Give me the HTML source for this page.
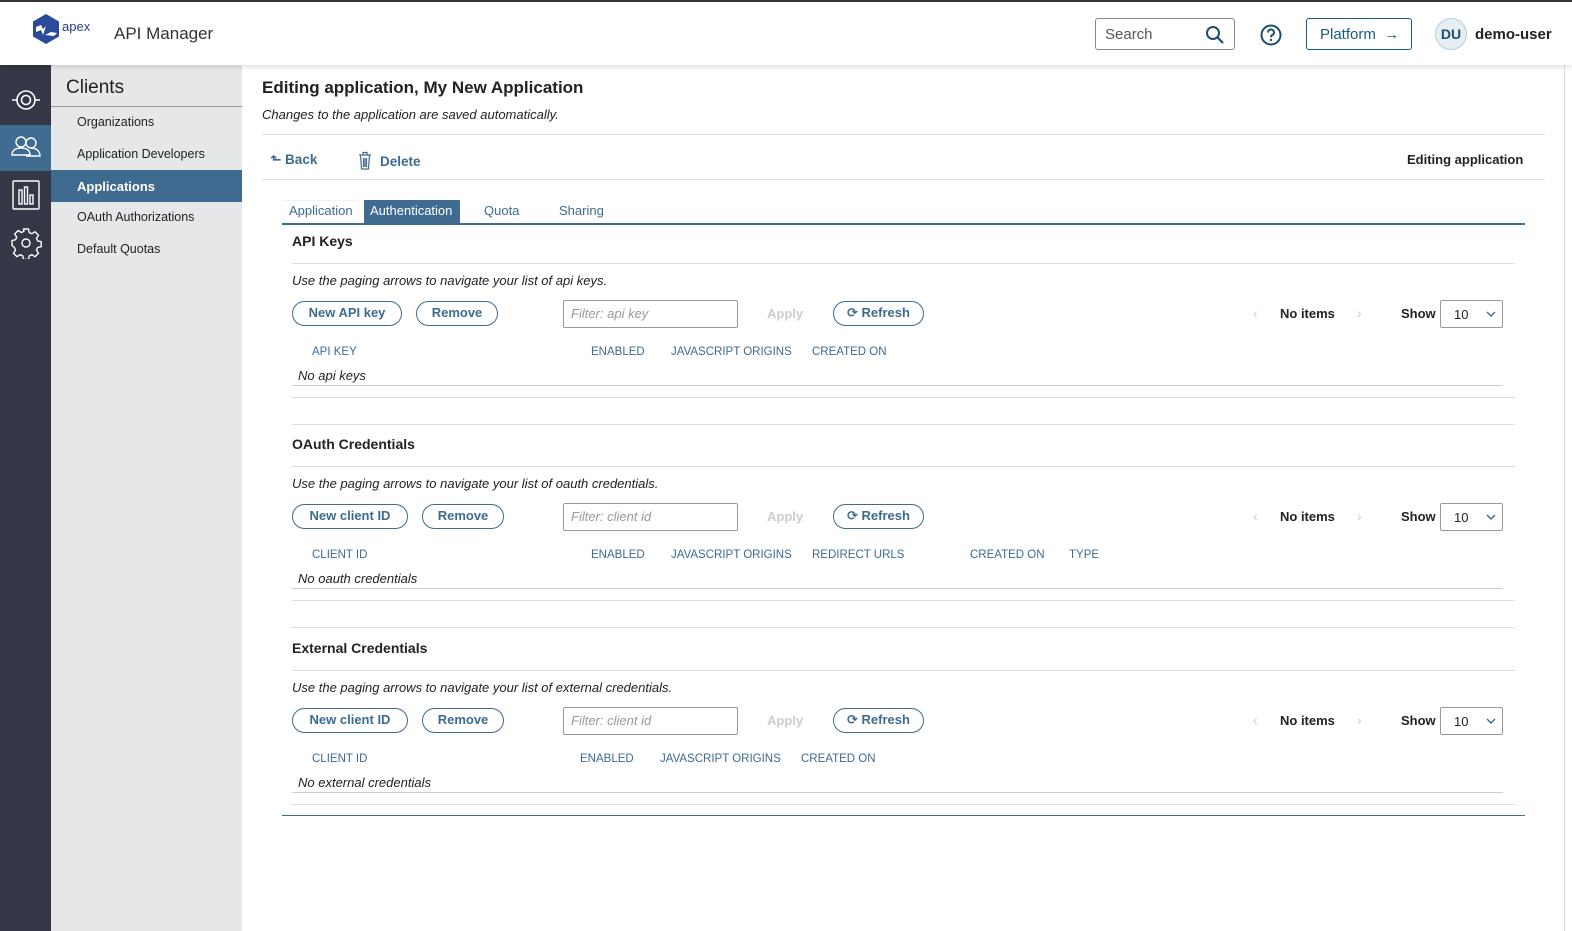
<!DOCTYPE html>
<html><head><meta charset="utf-8">
<style>
*{box-sizing:border-box;margin:0;padding:0}
body{width:1572px;height:931px;overflow:hidden;background:#fff;font-family:"Liberation Sans","DejaVu Sans",sans-serif;color:#222;position:relative}
.a{position:absolute;white-space:nowrap}
.hdr{position:absolute;left:0;top:0;width:1572px;height:65px;background:#fff;border-top:2px solid #333;box-shadow:0 2px 5px rgba(0,0,0,.12);z-index:2}
.rail{position:absolute;left:0;top:65px;width:51px;height:866px;background:#343746}
.sub{position:absolute;left:51px;top:65px;width:191px;height:866px;background:#e6e7e8}
.btn{position:absolute;height:25px;border:1.5px solid #3e6b8f;border-radius:13px;color:#3e6b8f;font-weight:bold;font-size:13px;line-height:22px;text-align:center}
.inp{position:absolute;height:28px;border:1px solid #999;border-radius:2px;font-style:italic;color:#999;font-size:13px;line-height:26px;padding-left:7px}
.th{position:absolute;font-size:11.5px;color:#3e6b8f}
.ln{position:absolute;height:1px;background:#ddd}
.sec{position:absolute;left:0;width:1572px;height:200px}
.bold{font-weight:bold}
.sel{position:absolute;left:1440px;top:68px;width:63px;height:28px;border:1px solid #999;border-radius:2px;font-size:13px;padding:6px 0 0 13px}
.sel svg{position:absolute;left:45px;top:10px}
</style></head><body>
<div class="hdr">
 <svg class="a" style="left:31px;top:11px" width="30" height="32" viewBox="0 0 30 32"><path d="M15 1 L28 8.5 V23.5 L15 31 L2 23.5 V8.5Z" fill="#2a4a9a"/><path d="M5 14 l5 -2 l2 4 l3 -3 l-3 9 l-2-5 l-5 2z M14 22 l6-3 l6 1 l-3 3z" fill="#fff"/></svg>
 <div class="a" style="left:62px;top:17px;font-size:13px;color:#2a3a8a">apex</div>
 <div class="a" style="left:114px;top:22px;font-size:17px;color:#333">API Manager</div>
 <div class="a" style="left:1095px;top:16px;width:140px;height:32px;border:1px solid #888;border-radius:3px;font-size:15px;color:#555;padding:7px 0 0 9px">Search</div>
 <svg class="a" style="left:1205px;top:23px" width="20" height="20" viewBox="0 0 20 20"><circle cx="8" cy="8" r="6" fill="none" stroke="#1e4d6b" stroke-width="2"/><path d="M12.5 12.5 L18 18" stroke="#1e4d6b" stroke-width="2.2"/></svg>
 <svg class="a" style="left:1259px;top:21px" width="24" height="24" viewBox="0 0 24 24"><circle cx="12" cy="12" r="9.5" fill="none" stroke="#1e4d6b" stroke-width="2"/><path d="M9 9.5a3 3 0 1 1 4 2.8c-.8.4-1 1-1 2" fill="none" stroke="#1e4d6b" stroke-width="2"/><circle cx="12" cy="17" r="1.2" fill="#1e4d6b"/></svg>
 <div class="a" style="left:1306px;top:16px;width:106px;height:32px;border:1px solid #1e5a7b;border-radius:3px;font-size:15px;color:#1e5a7b;padding:7px 0 0 13px">Platform &nbsp;→</div>
 <div class="a" style="left:1435px;top:16px;width:32px;height:32px;border-radius:50%;background:#e4eef3;border:1px solid #b8d0dc;font-size:14px;font-weight:bold;color:#1e4d6b;text-align:center;line-height:30px">DU</div>
 <div class="a" style="left:1475px;top:24px;font-size:15px;font-weight:bold;color:#222">demo-user</div>
</div>
<div class="a" style="left:1564px;top:65px;width:1px;height:866px;background:#ddd"></div>
<div class="rail">
 <svg class="a" style="left:11px;top:21px" width="30" height="28" viewBox="0 0 30 28"><circle cx="15" cy="14" r="9" fill="none" stroke="#fff" stroke-width="1.6"/><circle cx="15" cy="14" r="4.5" fill="none" stroke="#fff" stroke-width="1.6"/><path d="M1 14h5M24 14h5" stroke="#fff" stroke-width="1.6"/></svg>
 <div class="a" style="left:0;top:60px;width:51px;height:46px;background:#3e6b8f"></div>
 <svg class="a" style="left:10px;top:69px" width="32" height="26" viewBox="0 0 32 26"><g fill="none" stroke="#fff" stroke-width="1.4"><circle cx="11" cy="8" r="5"/><path d="M2 21c0-5 4-7 9-7s9 2 9 7z"/><circle cx="21" cy="9" r="5"/><path d="M16 22h14c0-5-4-8-9-8"/></g></svg>
 <svg class="a" style="left:12px;top:115px" width="28" height="30" viewBox="0 0 28 30"><g fill="none" stroke="#fff" stroke-width="1.4"><rect x="1" y="1" width="26" height="28" rx="1"/><rect x="7" y="10" width="3" height="14"/><rect x="12.5" y="7" width="3" height="17"/><rect x="18" y="15" width="3" height="9"/></g></svg>
 <svg class="a" style="left:10px;top:162px" width="32" height="32" viewBox="0 0 32 32"><g fill="none" stroke="#fff" stroke-width="1.4" stroke-linejoin="round"><path d="M13.5 2h5l.8 3.6 2.6 1.1 3.1-2 3.5 3.5-2 3.1 1.1 2.6 3.6.8v5l-3.6.8-1.1 2.6 2 3.1-3.5 3.5-3.1-2-2.6 1.1-.8 3.6h-5l-.8-3.6-2.6-1.1-3.1 2-3.5-3.5 2-3.1-1.1-2.6L2 18.5v-5l3.6-.8 1.1-2.6-2-3.1 3.5-3.5 3.1 2 2.6-1.1z"/><circle cx="16" cy="16" r="4"/></g></svg>
</div>
<div class="sub">
 <div class="a" style="left:15px;top:12px;font-size:19px;color:#222">Clients</div>
 <div class="a" style="left:0;top:41px;width:191px;height:1px;background:#999"></div>
 <div class="a" style="left:26px;top:50px;font-size:12.5px">Organizations</div>
 <div class="a" style="left:26px;top:82px;font-size:12.5px">Application Developers</div>
 <div class="a" style="left:0;top:105px;width:191px;height:32px;background:#3e6b8f"></div>
 <div class="a bold" style="left:26px;top:114px;font-size:13px;color:#fff">Applications</div>
 <div class="a" style="left:26px;top:145px;font-size:12.5px">OAuth Authorizations</div>
 <div class="a" style="left:26px;top:177px;font-size:12.5px">Default Quotas</div>
</div>

<div class="a bold" style="left:262px;top:78px;font-size:17px">Editing application, My New Application</div>
<div class="a" style="left:262px;top:107px;font-size:13px;font-style:italic">Changes to the application are saved automatically.</div>
<div class="ln" style="left:262px;top:134px;width:1283px"></div>
<div class="a bold" style="left:270px;top:152px;font-size:13.5px;color:#3e6b8f">⬑ Back</div>
<svg class="a" style="left:358px;top:151px" width="14" height="19" viewBox="0 0 14 19"><g fill="none" stroke="#3e6b8f" stroke-width="1.2"><path d="M1 4h12M5 4V1.5h4V4M2.5 4l1 14h7l1-14M5.5 7v9M7 7v9M8.5 7v9"/></g></svg>
<div class="a bold" style="left:380px;top:154px;font-size:13.5px;color:#3e6b8f">Delete</div>
<div class="a bold" style="left:1407px;top:152px;font-size:13px">Editing application</div>
<div class="ln" style="left:262px;top:179px;width:1283px"></div>

<div class="a" style="left:283px;top:200px;width:74px;height:1px;background:#f0f0f0"></div>
<div class="a" style="left:289px;top:203px;font-size:13px;color:#3e6b8f">Application</div>
<div class="a" style="left:364px;top:200px;width:96px;height:23px;background:#3e6b8f"></div>
<div class="a" style="left:370px;top:203px;font-size:13px;color:#fff">Authentication</div>
<div class="a" style="left:484px;top:203px;font-size:13px;color:#3e6b8f">Quota</div>
<div class="a" style="left:559px;top:203px;font-size:13px;color:#3e6b8f">Sharing</div>
<div class="a" style="left:282px;top:223px;width:1243px;height:2px;background:#3e6b8f"></div>

<div class="sec" style="top:232px">
 <div class="a bold" style="left:292px;top:1px;font-size:14px">API Keys</div>
 <div class="ln" style="left:292px;top:31px;width:1223px"></div>
 <div class="a" style="left:292px;top:41px;font-size:13px;font-style:italic">Use the paging arrows to navigate your list of api keys.</div>
 <div class="btn" style="left:292px;top:69px;width:110px">New API key</div>
 <div class="btn" style="left:416px;top:69px;width:82px">Remove</div>
 <div class="inp" style="left:563px;top:68px;width:175px">Filter: api key</div>
 <div class="a bold" style="left:767px;top:74px;font-size:13px;color:#ccc">Apply</div>
 <div class="btn" style="left:833px;top:69px;width:91px">⟳ Refresh</div>
 <div class="a" style="left:1253px;top:73px;font-size:14px;color:#ccc">‹</div>
 <div class="a bold" style="left:1280px;top:74px;font-size:13px">No items</div>
 <div class="a" style="left:1357px;top:73px;font-size:14px;color:#ccc">›</div>
 <div class="a bold" style="left:1401px;top:74px;font-size:13px">Show</div>
 <div class="sel">10<svg width="10" height="6" viewBox="0 0 10 6"><path d="M1 1l4 4 4-4" fill="none" stroke="#3e6b8f" stroke-width="1.4"/></svg></div>
 <div class="th" style="left:312px;top:114px">API KEY</div>
 <div class="th" style="left:591px;top:114px">ENABLED</div>
 <div class="th" style="left:671px;top:114px">JAVASCRIPT ORIGINS</div>
 <div class="th" style="left:812px;top:114px">CREATED ON</div>
 <div class="a" style="left:298px;top:136px;font-size:13px;font-style:italic">No api keys</div>
 <div class="ln" style="left:292px;top:153px;width:1211px;background:#ccc"></div>
 <div class="ln" style="left:292px;top:165px;width:1223px"></div>
 <div class="ln" style="left:292px;top:192px;width:1223px"></div>
</div>

<div class="sec" style="top:435px">
 <div class="a bold" style="left:292px;top:1px;font-size:14px">OAuth Credentials</div>
 <div class="ln" style="left:292px;top:31px;width:1223px"></div>
 <div class="a" style="left:292px;top:41px;font-size:13px;font-style:italic">Use the paging arrows to navigate your list of oauth credentials.</div>
 <div class="btn" style="left:292px;top:69px;width:116px">New client ID</div>
 <div class="btn" style="left:422px;top:69px;width:82px">Remove</div>
 <div class="inp" style="left:563px;top:68px;width:175px">Filter: client id</div>
 <div class="a bold" style="left:767px;top:74px;font-size:13px;color:#ccc">Apply</div>
 <div class="btn" style="left:833px;top:69px;width:91px">⟳ Refresh</div>
 <div class="a" style="left:1253px;top:73px;font-size:14px;color:#ccc">‹</div>
 <div class="a bold" style="left:1280px;top:74px;font-size:13px">No items</div>
 <div class="a" style="left:1357px;top:73px;font-size:14px;color:#ccc">›</div>
 <div class="a bold" style="left:1401px;top:74px;font-size:13px">Show</div>
 <div class="sel">10<svg width="10" height="6" viewBox="0 0 10 6"><path d="M1 1l4 4 4-4" fill="none" stroke="#3e6b8f" stroke-width="1.4"/></svg></div>
 <div class="th" style="left:312px;top:114px">CLIENT ID</div>
 <div class="th" style="left:591px;top:114px">ENABLED</div>
 <div class="th" style="left:671px;top:114px">JAVASCRIPT ORIGINS</div>
 <div class="th" style="left:812px;top:114px">REDIRECT URLS</div>
 <div class="th" style="left:970px;top:114px">CREATED ON</div>
 <div class="th" style="left:1069px;top:114px">TYPE</div>
 <div class="a" style="left:298px;top:136px;font-size:13px;font-style:italic">No oauth credentials</div>
 <div class="ln" style="left:292px;top:153px;width:1211px;background:#ccc"></div>
 <div class="ln" style="left:292px;top:165px;width:1223px"></div>
 <div class="ln" style="left:292px;top:192px;width:1223px"></div>
</div>

<div class="sec" style="top:639px">
 <div class="a bold" style="left:292px;top:1px;font-size:14px">External Credentials</div>
 <div class="ln" style="left:292px;top:31px;width:1223px"></div>
 <div class="a" style="left:292px;top:41px;font-size:13px;font-style:italic">Use the paging arrows to navigate your list of external credentials.</div>
 <div class="btn" style="left:292px;top:69px;width:116px">New client ID</div>
 <div class="btn" style="left:422px;top:69px;width:82px">Remove</div>
 <div class="inp" style="left:563px;top:68px;width:175px">Filter: client id</div>
 <div class="a bold" style="left:767px;top:74px;font-size:13px;color:#ccc">Apply</div>
 <div class="btn" style="left:833px;top:69px;width:91px">⟳ Refresh</div>
 <div class="a" style="left:1253px;top:73px;font-size:14px;color:#ccc">‹</div>
 <div class="a bold" style="left:1280px;top:74px;font-size:13px">No items</div>
 <div class="a" style="left:1357px;top:73px;font-size:14px;color:#ccc">›</div>
 <div class="a bold" style="left:1401px;top:74px;font-size:13px">Show</div>
 <div class="sel">10<svg width="10" height="6" viewBox="0 0 10 6"><path d="M1 1l4 4 4-4" fill="none" stroke="#3e6b8f" stroke-width="1.4"/></svg></div>
 <div class="th" style="left:312px;top:114px">CLIENT ID</div>
 <div class="th" style="left:580px;top:114px">ENABLED</div>
 <div class="th" style="left:660px;top:114px">JAVASCRIPT ORIGINS</div>
 <div class="th" style="left:801px;top:114px">CREATED ON</div>
 <div class="a" style="left:298px;top:136px;font-size:13px;font-style:italic">No external credentials</div>
 <div class="ln" style="left:292px;top:153px;width:1211px;background:#ccc"></div>
 <div class="ln" style="left:292px;top:165px;width:1223px"></div>
</div>
<div class="a" style="left:282px;top:815px;width:1243px;height:1px;background:#3e6b8f"></div>
</body></html>
